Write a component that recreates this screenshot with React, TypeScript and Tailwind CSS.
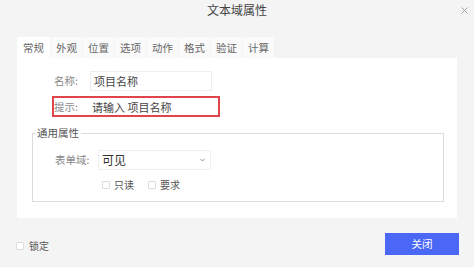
import React from "react";

const tabs = ["常规", "外观", "位置", "选项", "动作", "格式", "验证", "计算"];

function Box() {
  return <span className="block w-[8px] h-[8px] border border-[#dddddd] bg-white rounded-[1px]" />;
}

export default function App() {
  return (
    <div
      className="w-[474px] h-[270px] flex flex-col bg-white overflow-hidden"
      style={{ fontFamily: '"Noto Sans CJK SC", "Noto Sans", sans-serif' }}
    >
      <div className="h-[267px] bg-[#f4f4f4] flex flex-col">
        {/* header */}
        <div className="h-[20px] grid grid-cols-[1fr_auto_1fr] items-center">
          <div />
          <div className="text-[12px] leading-[20px] text-[#444]">文本域属性</div>
          <div className="flex justify-end pr-[6px]">
            <svg width="7" height="7" viewBox="0 0 7 7" className="block">
              <path d="M0.5 0.5 L6.5 6.5 M6.5 0.5 L0.5 6.5" stroke="#a0a0a0" strokeWidth="1" />
            </svg>
          </div>
        </div>

        {/* tabs */}
        <div className="mt-[17px] ml-[17px] flex gap-[1px] h-[21px]">
          {tabs.map((t, i) => (
            <div
              key={t}
              className={
                (i === 0 ? "bg-white w-[33px]" : "bg-[#fafafa] w-[31px]") +
                " h-full flex items-center justify-center text-[10.5px] leading-[14px] text-[#666]"
              }
            >
              {t}
            </div>
          ))}
        </div>

        {/* panel */}
        <div className="mx-[17px] h-[160px] bg-white flex flex-col">
          <div className="mt-[13px] ml-[37px] flex items-center h-[20px]">
            <div className="w-[36px] text-[10.5px] text-[#888] leading-[14px]">名称:</div>
            <div className="w-[122px] h-[20px] border border-[#eeeeee] flex items-center pl-[3px] text-[11px] leading-[14px] text-[#444]">
              项目名称
            </div>
          </div>

          <div className="mt-[5px] ml-[35px] w-[168px] h-[21px] border-2 border-[#e0454c] flex items-center">
            <div className="w-[37px] text-[10.5px] text-[#888] leading-[14px]">提示:</div>
            <div className="flex-1 h-full flex items-center pl-[1px] text-[11px] leading-[14px] text-[#444]">
              请输入 项目名称
            </div>
          </div>

          <fieldset className="mt-[9px] ml-[15px] w-[412px] border border-[#dcdcdc] pl-[22px] pb-[9px]">
            <legend className="ml-[-20px] px-[2px] text-[10.5px] leading-[14px] text-[#555]">通用属性</legend>
            <div className="mt-[10px] flex items-center h-[20px]">
              <div className="w-[43px] text-[10.5px] text-[#888] leading-[14px]">表单域:</div>
              <div className="w-[113px] h-[20px] border border-[#eeeeee] flex items-center justify-between pl-[3px] pr-[5px]">
                <span className="text-[12px] leading-[14px] text-[#333]">可见</span>
                <svg width="5" height="4" viewBox="0 0 5 4" className="block">
                  <path d="M0.5 1 L2.5 3 L4.5 1" stroke="#888" strokeWidth="0.9" fill="none" />
                </svg>
              </div>
            </div>
            <div className="mt-[8px] ml-[47px] flex items-center h-[14px] text-[10px] leading-[14px] text-[#555]">
              <Box />
              <span className="ml-[4px]">只读</span>
              <span className="ml-[14px]"><Box /></span>
              <span className="ml-[4px]">要求</span>
            </div>
          </fieldset>
        </div>

        {/* footer */}
        <div className="mt-[15px] flex items-center justify-between pl-[16px] pr-[15px]">
          <div className="flex items-center mt-[4px] text-[10px] leading-[14px] text-[#555]">
            <Box />
            <span className="ml-[5px]">锁定</span>
          </div>
          <button className="w-[74px] h-[22px] bg-[#4a67f5] text-white text-[10.5px] leading-[14px] flex items-center justify-center">
            关闭
          </button>
        </div>
      </div>
    </div>
  );
}
